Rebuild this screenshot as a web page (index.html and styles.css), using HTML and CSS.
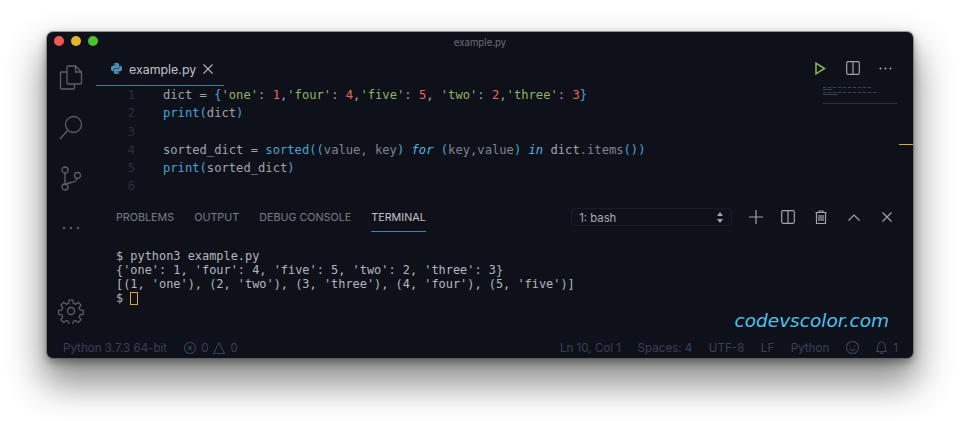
FILE: index.html
```html
<!DOCTYPE html>
<html lang="en">
<head>
<meta charset="utf-8">
<title>example.py</title>
<link rel="stylesheet" href="styles.css">
</head>
<body>
<div class="window">
  <header class="titlebar">
    <div class="lights"><span class="light red"></span><span class="light yellow"></span><span class="light green"></span></div>
    <div class="title">example.py</div>
  </header>
  <div class="workbench">
    <nav class="activity">
      <svg class="act files" width="24" height="25" viewBox="0 0 24 25"><path d="M9 1h7.500l6 6v11a1 1 0 0 1-1 1H9a1 1 0 0 1-1-1V2a1 1 0 0 1 1-1zM16.500 1v6h6M8 7H2.500a1 1 0 0 0-1 1v15a1 1 0 0 0 1 1h12a1 1 0 0 0 1-1v-4"/></svg>
      <svg class="act search" width="24" height="25" viewBox="0 0 24 25"><circle cx="14.500" cy="9.500" r="8"/><path d="M8.500 15.500L1 24"/></svg>
      <svg class="act git" width="20" height="25" viewBox="0 0 20 25"><circle cx="4" cy="4" r="3"/><circle cx="4" cy="21" r="3"/><circle cx="16.500" cy="9.500" r="3"/><path d="M4 7v11M16 12.500c-.5 3-3 3.500-6 4-3 .5-5 1-6 2.500"/></svg>
      <svg class="act more" width="20" height="4" viewBox="0 0 20 4"><circle cx="3" cy="2" r="1.200"/><circle cx="10" cy="2" r="1.200"/><circle cx="17" cy="2" r="1.200"/></svg>
      <svg class="act gear" width="26" height="26" viewBox="0 0 26 26"><circle cx="13" cy="13" r="3.500"/><path d="M11 1.500h4l.6 3.500 2.200.9 2.900-2 2.900 2.900-2 2.900.9 2.200 3.500.6v4l-3.500.6-.9 2.200 2 2.900-2.900 2.900-2.900-2-2.200.9-.6 3.500h-4l-.6-3.500-2.200-.9-2.900 2-2.900-2.900 2-2.900-.9-2.200-3.500-.6v-4l3.500-.6.9-2.200-2-2.900 2.900-2.900 2.900 2 2.200-.9z" transform="translate(.6 .6) scale(.95)"/></svg>
    </nav>
    <main class="main">
      <div class="tabbar">
        <div class="tab">
          <svg class="py" width="11" height="11" viewBox="0 0 24 24"><path d="M14.250.18l.9.2.73.26.59.3.45.32.34.34.25.34.16.33.1.3.04.26.02.2-.01.13V8.500l-.05.63-.13.55-.21.46-.26.38-.3.31-.33.25-.35.19-.35.14-.33.1-.3.07-.26.04-.21.02H8.770l-.69.05-.59.14-.5.22-.41.27-.33.32-.27.35-.2.36-.15.37-.1.35-.07.32-.04.27-.02.21v3.060H3.170l-.21-.03-.28-.07-.32-.12-.35-.18-.36-.26-.36-.36-.35-.46-.32-.59-.28-.73-.21-.88-.14-1.050-.05-1.230.06-1.220.16-1.040.24-.87.32-.71.36-.57.4-.44.42-.33.42-.24.4-.16.36-.1.32-.05.24-.01h.16l.06.01h8.160v-.83H6.180l-.01-2.750-.02-.37.05-.34.11-.31.17-.28.25-.26.31-.23.38-.2.44-.18.51-.15.58-.12.64-.1.71-.06.77-.04.84-.02 1.270.05zm-6.300 1.980l-.23.33-.08.41.08.41.23.34.33.22.41.09.41-.09.33-.22.23-.34.08-.41-.08-.41-.23-.33-.33-.22-.41-.09-.41.09zm13.090 3.950l.28.06.32.12.35.18.36.27.36.35.35.47.32.59.28.73.21.88.14 1.040.05 1.230-.06 1.230-.16 1.040-.24.86-.32.71-.36.57-.4.45-.42.33-.42.24-.4.16-.36.09-.32.05-.24.02-.16-.01h-8.220v.82h5.840l.01 2.760.02.36-.05.34-.11.31-.17.29-.25.25-.31.24-.38.2-.44.17-.51.15-.58.13-.64.09-.71.07-.77.04-.84.01-1.270-.04-1.070-.14-.9-.2-.73-.25-.59-.3-.45-.33-.34-.34-.25-.34-.16-.33-.1-.3-.04-.25-.02-.2.01-.13v-5.340l.05-.64.13-.54.21-.46.26-.38.3-.32.33-.24.35-.2.35-.14.33-.1.3-.06.26-.04.21-.02.13-.01h5.840l.69-.05.59-.14.5-.21.41-.28.33-.32.27-.35.2-.36.15-.36.1-.35.07-.32.04-.28.02-.21V6.070h2.090l.14.01zm-6.470 14.250l-.23.33-.08.41.08.41.23.33.33.23.41.08.41-.08.33-.23.23-.33.08-.41-.08-.41-.23-.33-.33-.23-.41-.08-.41.08z"/></svg>
          <span class="tab-name">example.py</span>
          <svg class="tab-close" width="10" height="10" viewBox="0 0 10 10"><path d="M.5.500l9 9M9.500.500l-9 9"/></svg>
        </div>
        <div class="tab-actions">
          <svg class="run" width="11" height="13" viewBox="0 0 11 13"><path d="M1 1.200v10.600l8.500-5.300z"/></svg>
          <svg class="icon" width="14" height="14" viewBox="0 0 14 14"><rect x=".7" y=".7" width="12.600" height="12.600" rx="1.200"/><path d="M7 .7v12.600"/></svg>
          <svg class="dots" width="13" height="3" viewBox="0 0 13 3"><circle cx="1.500" cy="1.500" r="1"/><circle cx="6.500" cy="1.500" r="1"/><circle cx="11.500" cy="1.500" r="1"/></svg>
        </div>
      </div>
      <section class="editor">
        <div class="gutter"><div>1</div><div>2</div><div>3</div><div>4</div><div>5</div><div>6</div></div>
        <pre class="code"><code>dict = <b>{</b><s>'one'</s>: <u>1</u>,<s>'four'</s>: <u>4</u>,<s>'five'</s>: <u>5</u>, <s>'two'</s>: <u>2</u>,<s>'three'</s>: <u>3</u><b>}</b>
<b>print(</b>dict<b>)</b>

sorted_dict = <b>sorted((</b><i>value, key</i><b>)</b> <em>for</em> <b>(</b><i>key,value</i><b>)</b> <em>in</em> dict<i>.items</i><b>())</b>
<b>print(</b>sorted_dict<b>)</b>
</code></pre>
        <div class="minimap">
          <div class="mini-line mini-a"></div>
          <div class="mini-line mini-b"></div>
          <div class="mini-line mini-c"></div>
          <div class="mini-line mini-d"></div>
          <div class="mini-rule"></div>
        </div>
        <div class="ruler-mark"></div>
      </section>
      <section class="panel">
        <div class="panel-head">
          <span class="ptab">PROBLEMS</span>
          <span class="ptab">OUTPUT</span>
          <span class="ptab">DEBUG CONSOLE</span>
          <span class="ptab active">TERMINAL</span>
          <div class="select"><span>1: bash</span>
            <svg class="updown" width="6" height="11" viewBox="0 0 6 11"><path d="M3 0l3 4H0zM3 11L0 7h6z"/></svg>
          </div>
          <div class="pactions">
            <span class="slot"><svg class="icon" width="14" height="14" viewBox="0 0 14 14"><path d="M7 0v14M0 7h14"/></svg></span>
            <span class="slot"><svg class="icon" width="14" height="14" viewBox="0 0 14 14"><rect x=".7" y=".7" width="12.600" height="12.600" rx="1.200"/><path d="M7 .7v12.600"/></svg></span>
            <span class="slot"><svg class="icon" width="12" height="14" viewBox="0 0 12 14"><path d="M.5 2.500h11M4 2.500V1h4v1.500M1.500 2.500v10.500a.5.5 0 0 0 .5.500h8a.5.5 0 0 0 .5-.5V2.500M4 5v6M6 5v6M8 5v6"/></svg></span>
            <span class="slot"><svg class="icon" width="12" height="7" viewBox="0 0 12 7"><path d="M.5 6.500L6 1l5.500 5.500"/></svg></span>
            <span class="slot"><svg class="icon" width="10" height="10" viewBox="0 0 10 10"><path d="M.5.500l9 9M9.500.500l-9 9"/></svg></span>
          </div>
        </div>
        <pre class="term">$ python3 example.py
{'one': 1, 'four': 4, 'five': 5, 'two': 2, 'three': 3}
[(1, 'one'), (2, 'two'), (3, 'three'), (4, 'four'), (5, 'five')]
$ <span class="cursor"></span></pre>
        <div class="brand">codevscolor.com</div>
      </section>
    </main>
  </div>
  <footer class="status">
    <span>Python 3.7.3 64-bit</span>
    <span class="diag">
      <svg class="si" width="12" height="12" viewBox="0 0 12 12"><circle cx="6" cy="6" r="5.500"/><path d="M3.800 3.800l4.400 4.400M8.200 3.800l-4.400 4.400"/></svg><span>0</span>
      <svg class="si" width="12" height="12" viewBox="0 0 12 12"><path d="M6 .8l5.500 10.700H.5z"/></svg><span>0</span>
    </span>
    <span class="status-right">
      <span>Ln 10, Col 1</span>
      <span>Spaces: 4</span>
      <span>UTF-8</span>
      <span>LF</span>
      <span>Python</span>
      <svg class="si smile" width="13" height="13" viewBox="0 0 13 13"><circle cx="6.500" cy="6.500" r="6"/><circle class="fill" cx="4.500" cy="5" r=".7"/><circle class="fill" cx="8.500" cy="5" r=".7"/><path d="M3.800 8c1.200 1.800 4.200 1.800 5.400 0"/></svg>
      <span class="bell"><svg class="si" width="11" height="13" viewBox="0 0 11 13"><path d="M.5 10.500c1-1 1.300-2 1.300-4.500C1.800 3 3.300 1 5.500 1s3.700 2 3.700 5c0 2.500.3 3.500 1.300 4.500zM4 10.700c0 2.400 3 2.400 3 0"/></svg><span>1</span></span>
    </span>
  </footer>
</div>
</body>
</html>
```
FILE: styles.css
```css
* { box-sizing: border-box; }
html, body { margin: 0; height: 421px; overflow: hidden; background: #fff; }
body { padding: 32px 47px 0; font-family: Inter, "Liberation Sans", sans-serif; }
svg { display: block; flex: none; fill: none; stroke-width: 1.1; }

.window {
  width: 866px; height: 326px;
  display: flex; flex-direction: column;
  background: #0f111a;
  border-radius: 6px;
  box-shadow: 0 0 0 1px rgba(90,90,90,.55), 0 4px 10px rgba(0,0,0,.4), 0 22px 36px 4px rgba(0,0,0,.45);
}

.titlebar { height: 20px; flex: none; display: flex; align-items: center; justify-content: center; padding-top: 1px; position: relative; }
.lights { position: absolute; left: 7px; top: 4px; display: flex; gap: 7px; }
.light { width: 10px; height: 10px; border-radius: 50%; }
.red { background: #ee5b4f; }
.yellow { background: #e2b52c; }
.green { background: #4cc22e; }
.title { font-size: 9.700px; color: #6a6e78; }

.workbench { flex: 1; display: flex; min-height: 0; }

.activity { width: 48px; flex: none; display: flex; flex-direction: column; align-items: center; padding-top: 13px; }
.act { stroke: #5c6068; stroke-width: 1.300; }
.search { margin-top: 25px; }
.git { margin-top: 26px; }
.more { margin-top: 35px; fill: #5c6068; stroke: none; }
.gear { margin-top: 68px; }

.main { flex: 1; min-width: 0; display: flex; flex-direction: column; }

.tabbar { height: 34px; flex: none; display: flex; padding-left: 1px; }
.tab { width: 128px; height: 34px; display: flex; align-items: center; padding-left: 15px; border-bottom: 1.500px solid #2f7f9f; }
.py { fill: #4a90b8; stroke: none; }
.tab-name { margin-left: 7px; padding-top: 1px; font-size: 12.400px; color: #c0c3cb; }
.tab-close { margin-left: 7px; stroke: #b0b3ba; }
.tab-actions { margin-left: auto; display: flex; align-items: center; padding: 0 21px 2px 0; }
.run { stroke: #84bd58; stroke-width: 1.500; }
.tab-actions .icon { margin-left: 20px; }
.icon { stroke: #a0a3aa; stroke-width: 1.200; }
.dots { margin-left: 19px; fill: #a8abb2; stroke: none; }

.editor { height: 114px; flex: none; display: flex; position: relative; }
.gutter { width: 40px; flex: none; text-align: right; font: 12.150px/18.250px "DejaVu Sans Mono", monospace; color: #2a2e3a; }
.code { margin: 0 0 0 28px; flex: 1; font: 12.150px/18.250px "DejaVu Sans Mono", monospace; color: #a0a4ac; }
.code b { font-weight: normal; color: #4ba3d3; }
.code s { text-decoration: none; color: #8eb565; }
.code u { text-decoration: none; color: #e8695c; }
.code i { font-style: normal; color: #7f8590; }
.code em { font-style: italic; color: #54b4e4; }
.minimap { width: 74px; flex: none; margin-right: 16px; padding-top: 1px; display: flex; flex-direction: column; }
.mini-line { height: 1px; margin-bottom: 1px; background: repeating-linear-gradient(90deg, #3c4352 0 3px, #161923 3px 5px); }
.mini-a { width: 48px; }
.mini-b { width: 9px; background: #2c465a; margin-bottom: 2px; }
.mini-c { width: 56px; }
.mini-d { width: 15px; background: #2c465a; }
.mini-rule { height: 1px; margin-top: 7px; background: #2a2e3a; }
.ruler-mark { position: absolute; right: 0; top: 58px; width: 14px; height: 1px; background: #d9ae2c; }

.panel { flex: 1; min-height: 0; position: relative; }
.panel-head { height: 33px; display: flex; align-items: center; padding: 1px 10px 0 21px; gap: 20px; }
.ptab { font-size: 10.750px; line-height: 26px; padding-top: 1px; color: #7a7e87; }
.ptab.active { color: #c0c3cb; box-shadow: 0 1px 0 #3a87a8; line-height: 26px; height: 27px; }
.select { margin-left: auto; width: 161px; height: 18px; display: flex; align-items: center; justify-content: space-between; padding: 1px 8px 0 7px; border: 1px solid #1a1d29; border-radius: 4px; font-size: 11.300px; color: #a8abb2; }
.updown { fill: #a0a3aa; stroke: none; }
.pactions { display: flex; margin-left: -13px; }
.slot { width: 32.750px; display: flex; justify-content: center; align-items: center; }
.term { margin: 16px 0 0 21px; font: 11.920px/14.100px "DejaVu Sans Mono", monospace; color: #b4b7bd; }
.cursor { display: inline-block; width: 8px; height: 13px; border: 1px solid #d9a92c; vertical-align: -3px; }
.brand { position: absolute; right: 24px; bottom: 4px; font: italic 18.500px/22px "DejaVu Sans", sans-serif; color: #4fc1ee; }

.status { height: 22px; flex: none; display: flex; align-items: center; padding: 1px 15px 0 16px; font-size: 11.600px; color: #364156; }
.si { stroke: #364156; }
.si .fill { fill: #364156; stroke: none; }
.diag { margin-left: 17px; display: flex; align-items: center; gap: 5px; }
.status-right { margin-left: auto; display: flex; align-items: center; gap: 16.500px; }
.bell { margin-left: 1px; display: flex; align-items: center; gap: 6px; }
```
